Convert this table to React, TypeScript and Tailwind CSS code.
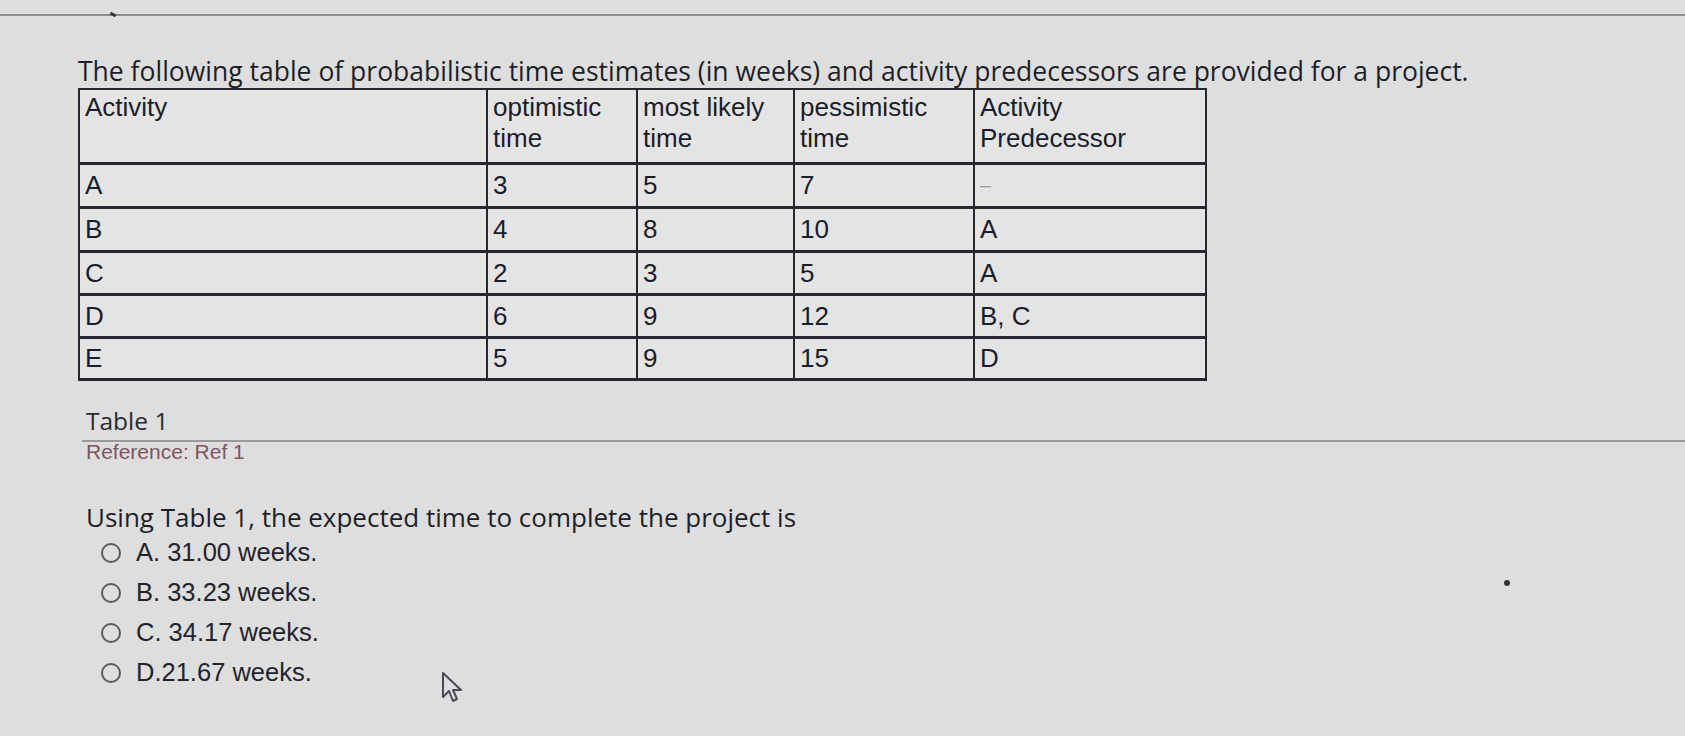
import React from "react";

const cols = [408, 150, 157, 180, 232];
const rows: string[][] = [
  ["A", "3", "5", "7", "–"],
  ["B", "4", "8", "10", "A"],
  ["C", "2", "3", "5", "A"],
  ["D", "6", "9", "12", "B, C"],
  ["E", "5", "9", "15", "D"],
];
const rowH = [44, 44, 43, 43, 42];

export default function App() {
  return (
    <div className="relative w-full h-[736px] overflow-hidden bg-[#dddedd]">
      <div className="h-[14px]" />
      <div className="h-[2px] bg-[#8c8c8c]" />
      <div className="absolute left-[110px] top-[13px] w-[6px] h-[3px] bg-[#333] rotate-[30deg]" />
      <div className="pl-[78px]">
        <div
          className="mt-[39px] h-[32px] leading-[32px] text-[26.5px] text-[#1e1e28] whitespace-nowrap"
          style={{ fontFamily: '"Open Sans", sans-serif' }}
        >
          The following table of probabilistic time estimates (in weeks) and activity predecessors are provided for a project.
        </div>
        <table
          className="mt-[1px] border-collapse table-fixed text-[26px] text-[#1c1c2a]"
          style={{ fontFamily: '"Liberation Sans", Arial, sans-serif', width: 1127 }}
        >
          <colgroup>
            {cols.map((w, i) => (
              <col key={i} style={{ width: w }} />
            ))}
          </colgroup>
          <thead>
            <tr className="h-[74px] bg-[#e3e4e3]">
              <th className="border-t-2 border-b-[3px] border-l-2 border-r-2 border-[#2a2630] align-top text-left font-normal pl-[5px] pt-[2px] leading-[31px]">Activity</th>
              <th className="border-t-2 border-b-[3px] border-r-2 border-[#2a2630] align-top text-left font-normal pl-[5px] pt-[2px] leading-[31px]">optimistic<br />time</th>
              <th className="border-t-2 border-b-[3px] border-r-2 border-[#2a2630] align-top text-left font-normal pl-[5px] pt-[2px] leading-[31px]">most likely<br />time</th>
              <th className="border-t-2 border-b-[3px] border-r-2 border-[#2a2630] align-top text-left font-normal pl-[5px] pt-[2px] leading-[31px]">pessimistic<br />time</th>
              <th className="border-t-2 border-b-[3px] border-r-2 border-[#2a2630] align-top text-left font-normal pl-[5px] pt-[2px] leading-[31px]">Activity<br />Predecessor</th>
            </tr>
          </thead>
          <tbody>
            {rows.map((r, i) => (
              <tr key={i} className="bg-[#e3e4e3]" style={{ height: rowH[i] }}>
                {r.map((c, j) => (
                  <td
                    key={j}
                    className={
                      "border-b-[3px] border-r-2 border-[#2a2630] pl-[5px] leading-[30px] align-middle " +
                      (j === 0 ? "border-l-2 " : "") +
                      (c === "–" ? "text-[#9a9a9a] text-[20px]" : "")
                    }
                  >
                    {c}
                  </td>
                ))}
              </tr>
            ))}
          </tbody>
        </table>

        <div
          className="mt-[25px] pl-[8px] h-[30px] leading-[30px] text-[24.5px] text-[#2a2a32]"
          style={{ fontFamily: '"Open Sans", sans-serif' }}
        >
          Table 1
        </div>
      </div>
      <div className="ml-[82px] mt-[4px] h-[2px] bg-[#9a9a9c]" />
      <div className="pl-[86px]">
        <div
          className="mt-[-1px] h-[22px] leading-[22px] text-[21px] text-[#7d5560]"
          style={{ fontFamily: '"Liberation Sans", Arial, sans-serif' }}
        >
          Reference: Ref 1
        </div>
        <div
          className="mt-[38px] h-[32px] leading-[32px] text-[26px] text-[#1e1e28] whitespace-nowrap"
          style={{ fontFamily: '"Open Sans", sans-serif' }}
        >
          Using Table 1, the expected time to complete the project is
        </div>
        <div
          className="flex flex-col text-[25.5px] text-[#23232e]"
          style={{ fontFamily: '"Liberation Sans", Arial, sans-serif' }}
        >
          {["A. 31.00 weeks.", "B. 33.23 weeks.", "C. 34.17 weeks.", "D.21.67 weeks."].map((t, i) => (
            <div key={i} className="flex items-center h-[40px] pl-[15px] gap-[15px]">
              <span className="w-[20px] h-[20px] rounded-full border-2 border-[#5a5a60]" />
              <span>{t}</span>
            </div>
          ))}
        </div>
      </div>

      <svg className="absolute left-[441px] top-[671px]" width="22" height="34" viewBox="0 0 22 34">
        <path d="M2 2 L2 26 L8 20 L12 30 L16 28 L12 19 L20 19 Z" fill="#dddedd" stroke="#4a4a55" strokeWidth="2" strokeLinejoin="round" />
      </svg>
      <div className="absolute left-[1504px] top-[580px] w-[6px] h-[6px] rounded-full bg-[#333]" />
    </div>
  );
}
